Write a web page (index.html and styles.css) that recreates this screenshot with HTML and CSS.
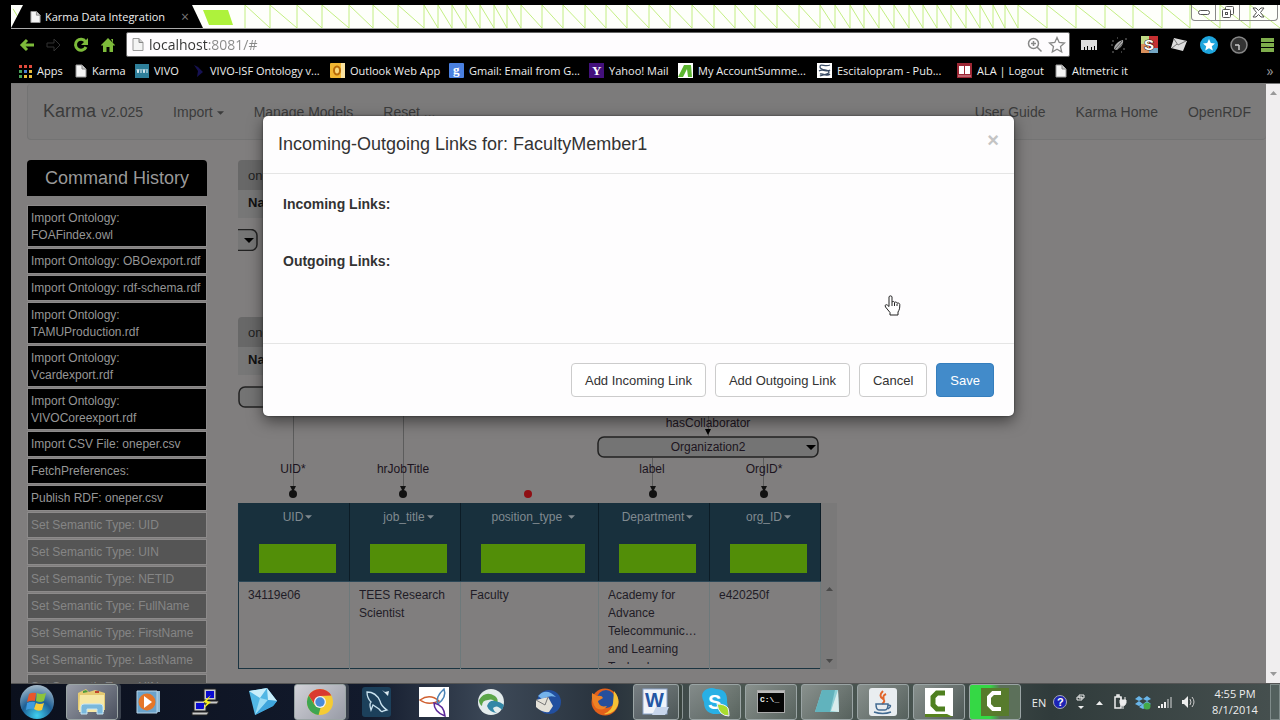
FILE: index.html
```html
<!DOCTYPE html>
<html lang="en">
<head>
<meta charset="utf-8">
<title>Karma Data Integration</title>
<link rel="stylesheet" href="styles.css">
</head>
<body>
<svg class="defs" width="0" height="0" aria-hidden="true">
  <symbol id="doc" viewBox="0 0 12 14"><path d="M1 1h6l4 4v8H1z" fill="#f4f4f4" stroke="#999"/><path d="M7 1v4h4" fill="#ccc" stroke="#888"/></symbol>
  <symbol id="caret" viewBox="0 0 8 4"><path d="M0 0h8L4 4z" fill="currentColor"/></symbol>
</svg>

<header class="chrome">
  <div class="tabstrip">
    <svg class="theme" viewBox="11 0 1269 24" preserveAspectRatio="none" aria-hidden="true">
      <path d="M13 4l7 12" stroke="#b9ea6c" fill="none"/>
      <polyline fill="none" stroke="#c2ee80" points="245,24 245,0 270,24 270,0 297,24 297,0 322,24 322,0 349,24 349,0 373,24 373,0 398,24 398,0 424,24 424,0 438,24 438,0 452,24 452,0 466,24 466,0 480,24 480,0 494,24 494,0 507,24 507,0 521,24 521,0 542,24 542,0 563,24 563,0 585,24 585,0 606,24 606,0 627,24 627,0 649,24 649,0 670,24 670,0 692,24 692,0 714,24 714,0 735,24 735,0 755,24 755,0 777,24 777,0 799,24 799,0 820,24 820,0 835,24 835,0 850,24 850,0 864,24 864,0 879,24 879,0 894,24 894,0 909,24 909,0 923,24 923,0 937,24 937,0 951,24 951,0 966,24 966,0 980,24 980,0 993,24 993,0 1005,24 1005,0 1018,24 1018,0 1047,24 1047,0 1076,24 1076,0 1105,24 1105,0 1133,24 1133,0 1162,24 1162,0 1190,24 1190,0 1220,24 1220,0 1250,24 1250,0 1280,24"/>
    </svg>
    <div class="tab">
      <svg width="11" height="14"><use href="#doc"/></svg>
      <span class="tab-title">Karma Data Integration</span>
      <button class="tab-close" aria-label="Close tab">×</button>
    </div>
    <button class="newtab" aria-label="New tab"></button>
    <div class="winbtns">
      <button aria-label="Minimize"><svg width="12" height="6"><rect x=".5" y=".5" width="11" height="4" rx="2" fill="#fff" stroke="#555"/></svg></button>
      <button aria-label="Restore"><svg width="14" height="13" fill="#fff" stroke="#555"><rect x="4.500" y=".5" width="8" height="8" rx="1"/><rect x="1.500" y="3.500" width="8" height="8" rx="1"/><rect x="4.500" y="6.500" width="2" height="2"/></svg></button>
      <button aria-label="Close"><svg width="13" height="11"><path d="M1 1h3l2.500 2.500L9 1h3L8.500 5.500 12 10H9L6.500 7.500 4 10H1l3.500-4.500z" fill="#fff" stroke="#555"/></svg></button>
    </div>
  </div>

  <div class="toolbar">
    <nav class="nav">
      <button aria-label="Back"><svg width="16" height="14"><path d="M8 2L3 7l5 5M3 7h12" fill="none" stroke="#7dbb3a" stroke-width="3"/></svg></button>
      <button aria-label="Forward"><svg width="16" height="14"><path d="M8 1l6 6-6 6V9H1V5h7z" fill="none" stroke="#333"/></svg></button>
      <button aria-label="Reload"><svg width="16" height="16"><path d="M12.500 4.500A5.500 5.500 0 1 0 13 10" fill="none" stroke="#7dbb3a" stroke-width="3"/><path d="M15 1v7H8z" fill="#7dbb3a"/></svg></button>
      <button aria-label="Home"><svg width="16" height="16"><path d="M8 1l7 7-1 1-1-1v7H9.500v-5h-3v5H3V8L2 9 1 8zM11 2h2v4z" fill="#7dbb3a"/></svg></button>
    </nav>
    <div class="omnibox">
      <svg width="12" height="15"><use href="#doc"/></svg>
      <input class="url" type="text" aria-label="Address" value="localhost:8081/#">
      <svg width="16" height="16" fill="none" stroke="#888"><circle cx="6.500" cy="6.500" r="5" stroke-width="1.500"/><path d="M4 6.500h5M6.500 4v5M10 10l4.500 4.500" stroke-width="1.500"/></svg>
      <svg width="18" height="18"><path d="M9 1.500l2.200 5 5.300.5-4 3.600 1.200 5.400L9 13.200 4.300 16l1.200-5.400L1.500 7l5.300-.5z" fill="none" stroke="#888" stroke-width="1.300"/></svg>
    </div>
    <div class="exts">
      <button aria-label="Ruler"><svg width="16" height="10"><path d="M0 0h16v10h-2V6h-1v4h-2V7h-1v3H7V6H6v4H4V7H3v3H0z" fill="#ddd"/></svg></button>
      <button aria-label="Bug"><svg width="18" height="18"><path d="M4 13C4 9 8 5 13 4c1 4-3 9-7 10z" fill="#aaa"/><path d="M5 13L12 5M7 14l6-7" stroke="#555"/><path d="M2 5h2M1 9h2M7 2h1M13 13h2M11 16h1M2 16h2M15 3h2" stroke="#777"/></svg></button>
      <button aria-label="S extension"><svg width="17" height="17"><path d="M0 0h8v8H0z" fill="#c0da86"/><path d="M8 0h9v12H8z" fill="#c62f31"/><path d="M0 8h8v9H0z" fill="#d8905c"/><path d="M8 12h9v5H8z" fill="#75a7c4"/><text x="3" y="14" class="g-s">S</text></svg></button>
      <button aria-label="Mail"><svg width="18" height="14"><path d="M4 0l13 3-4 10L1 10z" fill="#ddd"/><path d="M4 1l4 6 8-4M2 10l5-4" fill="none" stroke="#777"/></svg></button>
      <button aria-label="Favorites"><svg width="18" height="18"><circle cx="9" cy="9" r="9" fill="#1ea5dd"/><path d="M9 3l1.800 4 4.200.4-3.200 2.800 1 4.300L9 12.300l-3.800 2.200 1-4.300L3 7.400 7.200 7z" fill="#fff"/></svg></button>
      <button aria-label="Clock"><svg width="18" height="18"><circle cx="9" cy="9" r="8" fill="#333" stroke="#888" stroke-width="1.500"/><path d="M9 9v5M9 9H5" stroke="#ccc" stroke-width="1.500"/></svg></button>
      <button aria-label="Menu"><svg width="13" height="14"><path d="M0 2h13M0 7h13M0 12h13" stroke="#7fae4c" stroke-width="4"/></svg></button>
    </div>
  </div>

  <nav class="bookmarks">
    <a href="#"><svg width="14" height="14"><g fill="#e04a3c"><path d="M1 1h3v3H1zM6 1h3v3H6zM11 1h3v3h-3z"/></g><g fill="#49a35a"><path d="M1 6h3v3H1z"/></g><g fill="#4c7fd0"><path d="M6 6h3v3H6z"/></g><g fill="#e8bd3c"><path d="M11 6h3v3h-3zM6 11h3v3H6zM11 11h3v3h-3z"/></g><path d="M1 11h3v3H1z" fill="#49a35a"/></svg>Apps</a>
    <a href="#"><svg width="12" height="14"><use href="#doc"/></svg>Karma</a>
    <a href="#"><svg width="14" height="14"><rect width="14" height="14" fill="#2e7f9a"/><path d="M2 5l1 4 1-4M6 5v4M8 5l1 4 1-4M12 5v4" fill="none" stroke="#e8f4f8"/></svg>VIVO</a>
    <a href="#"><svg width="12" height="14"><path d="M1 1l4 2 5 5-6 5 1-6z" fill="#161152"/></svg>VIVO-ISF Ontology v...</a>
    <a href="#"><svg width="15" height="15"><rect width="15" height="15" rx="1" fill="#f2b632"/><path d="M11 0h4v15h-4z" fill="#fbe3a0"/><ellipse cx="7" cy="7.500" rx="3" ry="4" fill="#f9d77c" stroke="#b96a08" stroke-width="2"/></svg>Outlook Web App</a>
    <a href="#"><svg width="15" height="15"><rect width="15" height="15" rx="1" fill="#4a80e0"/><text x="4" y="11" class="g-g">g</text></svg>Gmail: Email from G...</a>
    <a href="#"><svg width="15" height="15"><rect width="15" height="15" fill="#43107c"/><text x="3" y="12" class="g-y">Y</text></svg>Yahoo! Mail</a>
    <a href="#"><svg width="15" height="15"><rect width="15" height="15" fill="#fff"/><path d="M0 14L6 2h7l1 12h-4L9 6l-4 8z" fill="#5cb531"/></svg>My AccountSumme...</a>
    <a href="#"><svg width="15" height="15"><rect width="15" height="15" fill="#fff"/><path d="M13 2C8 4 3 0 3 4s9 2 9 5-6 2-9 4M2 8c4-3 8 2 11-1M3 11c4-1 7 3 10 0" fill="none" stroke="#3a4c66" stroke-width="1.300"/></svg>Escitalopram - Pub...</a>
    <a href="#"><svg width="15" height="15"><rect width="15" height="15" fill="#9c2734"/><path d="M2 3h5v8H2zM8 3h5v8H8z" fill="#fff"/><path d="M1 13h13" stroke="#e0a0a8"/></svg>ALA | Logout</a>
    <a href="#"><svg width="12" height="14"><use href="#doc"/></svg>Altmetric it</a>
    <button class="more" aria-label="More bookmarks">»</button>
  </nav>
</header>

<main class="viewport">
  <div class="page">
    <nav class="navbar">
      <a class="brand" href="#">Karma <small>v2.025</small></a>
      <a href="#">Import <svg width="7" height="4"><use href="#caret"/></svg></a>
      <a href="#">Manage Models</a>
      <a href="#">Reset ...</a>
      <span class="spacer"></span>
      <a href="#">User Guide</a>
      <a href="#">Karma Home</a>
      <a href="#">OpenRDF</a>
    </nav>
    <div class="columns">
      <aside class="history">
        <h2>Command History</h2>
        <ul>
          <li class="two">Import Ontology:<br>FOAFindex.owl</li>
          <li>Import Ontology: OBOexport.rdf</li>
          <li>Import Ontology: rdf-schema.rdf</li>
          <li class="two">Import Ontology:<br>TAMUProduction.rdf</li>
          <li class="two">Import Ontology:<br>Vcardexport.rdf</li>
          <li class="two">Import Ontology:<br>VIVOCoreexport.rdf</li>
          <li>Import CSV File: oneper.csv</li>
          <li>FetchPreferences:</li>
          <li>Publish RDF: oneper.csv</li>
          <li class="undone">Set Semantic Type: UID</li>
          <li class="undone">Set Semantic Type: UIN</li>
          <li class="undone">Set Semantic Type: NETID</li>
          <li class="undone">Set Semantic Type: FullName</li>
          <li class="undone">Set Semantic Type: FirstName</li>
          <li class="undone">Set Semantic Type: LastName</li>
          <li class="undone">Set Semantic Type: UIN</li>
        </ul>
      </aside>

      <div class="sheets">
        <section class="sheet">
          <div class="sheet-title">oneper.csv</div>
          <div class="sheet-name">Name:</div>
          <svg class="stub" width="20" height="22"><path d="M0 .500H13a6 6 0 0 1 6 6v9a6 6 0 0 1-6 6H0" fill="#767676" stroke="#222" stroke-width="1.500"/><path d="M6 9h10l-5 5z"/></svg>
        </section>
        <section class="sheet">
          <div class="sheet-title">oneper.csv</div>
          <div class="sheet-name">Name:</div>
          <svg class="graph" width="582" height="117" font-size="12" text-anchor="middle">
            <g stroke="#5c5c5c"><path d="M55.500 21v84M165.500 21v84M414.500 72v33M525.500 72v33M470.500 20v30"/></g>
            <rect x="1" y="1" width="400" height="20" rx="6" fill="#747474" stroke="#222" stroke-width="1.500"/>
            <rect x="360" y="51" width="220" height="20" rx="6" fill="#747474" stroke="#222" stroke-width="1.500"/>
            <path d="M568 59h10l-5 5zM467 43h6l-3 6z"/>
            <g fill="#1c1420"><text x="470" y="41">hasCollaborator</text><text x="470" y="65">Organization2</text><text x="55" y="87">UID*</text><text x="165" y="87">hrJobTitle</text><text x="414" y="87">label</text><text x="526" y="87">OrgID*</text></g>
            <g fill="#111"><circle cx="55" cy="108" r="4"/><circle cx="165" cy="108" r="4"/><circle cx="415" cy="108" r="4"/><circle cx="526" cy="108" r="4"/><path d="M52 100h6l-3 6zM162 100h6l-3 6zM412 100h6l-3 6zM523 100h6l-3 6z"/></g>
            <circle cx="290" cy="108" r="4" fill="#8f0f14"/>
          </svg>
          <div class="grid">
            <table>
              <colgroup><col class="c"><col class="c"><col class="w"><col class="c"><col class="c"></colgroup>
              <thead><tr>
                <th>UID<svg width="7" height="4"><use href="#caret"/></svg><div class="bar"></div></th>
                <th>job_title<svg width="7" height="4"><use href="#caret"/></svg><div class="bar"></div></th>
                <th>position_type <svg width="7" height="4"><use href="#caret"/></svg><div class="bar"></div></th>
                <th>Department<svg width="7" height="4"><use href="#caret"/></svg><div class="bar"></div></th>
                <th>org_ID<svg width="7" height="4"><use href="#caret"/></svg><div class="bar"></div></th>
              </tr></thead>
              <tbody><tr>
                <td><div>34119e06</div></td>
                <td><div>TEES Research Scientist</div></td>
                <td><div>Faculty</div></td>
                <td><div>Academy for Advance Telecommunic… and Learning Technology</div></td>
                <td><div>e420250f</div></td>
              </tr></tbody>
            </table>
            <div class="gridscroll"><svg width="7" height="4"><path d="M0 4h7L3.500 0z" fill="#4a4a4a"/></svg><svg width="7" height="4"><path d="M0 0h7L3.500 4z" fill="#4a4a4a"/></svg></div>
          </div>
        </section>
      </div>
    </div>
  </div>
  <div class="scrollbar"><svg width="7" height="4"><path d="M0 4h7L3.500 0z" fill="#999"/></svg><svg width="7" height="4"><path d="M0 0h7L3.500 4z" fill="#999"/></svg></div>

  <div class="dialog" role="dialog" aria-labelledby="dlg">
    <div class="dialog-head"><h4 id="dlg">Incoming-Outgoing Links for: FacultyMember1</h4><button class="x" aria-label="Close">×</button></div>
    <div class="dialog-body"><p>Incoming Links:</p><p>Outgoing Links:</p></div>
    <div class="dialog-foot">
      <button class="btn">Add Incoming Link</button>
      <button class="btn">Add Outgoing Link</button>
      <button class="btn">Cancel</button>
      <button class="btn primary">Save</button>
    </div>
    <svg class="cursor" width="18" height="22"><path d="M5 2c0-1.500 3-1.500 3 0v5c1-1 2.500-.5 2.500.5 1-1 2.500-.3 2.500.8 1-.8 2.800 0 2.800 1.200 0 4-.3 5-1.800 7.500v3H6v-2.500L1.500 12c-1-2 .5-3 2-1.800L5 11.500z" fill="#fff" stroke="#222"/><path d="M8 7v4M10.500 8v3M13 9v2" stroke="#222"/></svg>
  </div>
</main>

<footer class="taskbar">
  <button class="start" aria-label="Start"><svg width="36" height="34"><defs><radialGradient id="orb" cx=".5" cy=".9" r=".9"><stop offset="0" stop-color="#3fd0ef"/><stop offset=".5" stop-color="#1d5f96"/><stop offset="1" stop-color="#a5bac9"/></radialGradient></defs><circle cx="18" cy="17" r="17" fill="url(#orb)"/><path d="M10 9q3-2 7-1l-1 8q-4-1-8 1z" fill="#e8562a"/><path d="M18 8q4 2 9 0l-2 8q-4 2-8 0z" fill="#8cc43c"/><path d="M8 18q4-2 8-1l-1 7q-4-1-8 1z" fill="#3f9be0"/><path d="M17 18q4 2 8 0l-2 7q-4 2-8-1z" fill="#f8cc3a"/></svg></button>
  <button class="task open" aria-label="Explorer"><svg width="32" height="28"><path d="M2 5l8-4 3 3 6-2 10 3v17H2z" fill="#e5ca72"/><path d="M4 7h24v17H3z" fill="#f6e8a6"/><path d="M7 3l3-1 2 2-5 1z" fill="#4c9c3c"/><path d="M19 3h4v2h-4z" fill="#c2452c"/><path d="M5 26v-7q0-3 3-3h16q3 0 3 3v7h-6v-5H11v5z" fill="#79b8dc" stroke="#c8e5f4"/></svg></button>
  <button class="task" aria-label="Media Player"><svg width="26" height="26"><path d="M6 2h18v21H6z" fill="#8fbad6"/><path d="M1 2h20v22H1z" fill="#6ba3cb" stroke="#b7d3e6"/><circle cx="11" cy="13" r="8.500" fill="#e57628"/><path d="M8 7l8 6-8 6z" fill="#fff"/></svg></button>
  <button class="task" aria-label="PuTTY"><svg width="30" height="30"><g stroke="#222" fill="#ccc"><path d="M13 2h12v11H13zM14 14h14l-2 3H13zM3 14h12v10H3zM1 25h17l-2 3H1z"/></g><path d="M15 4h8v7h-8zM5 16h8v6H5z" fill="#0a0ad0"/><path d="M20 8l-8 7 4 1-4 6 8-7-4-1z" fill="#f8f020"/></svg></button>
  <button class="task" aria-label="Diamond"><svg width="30" height="30"><path d="M1 4l18-3 10 13-4 5L7 28z" fill="#52b7e5"/><path d="M1 4l18-3-7 10zM19 1l10 13-9-1z" fill="#c9eefb"/><path d="M12 11l8 2L7 28z" fill="#9adcf5"/><path d="M20 13l9 1-4 5-18 9z" fill="#3fa5dc"/></svg></button>
  <button class="task open bright" aria-label="Chrome"><svg width="28" height="28"><circle cx="14" cy="14" r="13" fill="#f5cb34"/><path d="M2.700 7.500A13 13 0 0 1 25.300 7.500L14 8 9 17z" fill="#d93a30"/><path d="M2.700 7.500L8.500 17l6 3-2 7A13 13 0 0 1 2.700 7.500z" fill="#3ea551"/><circle cx="14" cy="14" r="6" fill="#f2f2f2"/><circle cx="14" cy="14" r="4.700" fill="#4a8bd8"/></svg></button>
  <button class="task" aria-label="MySQL Workbench"><svg width="30" height="30"><rect width="29" height="30" rx="3" fill="#1c405b"/><path d="M5 5q9 0 13 9 1 5 7 9l-4 1q-1 2-4-2l-6-4-2 5q-2-6 0-8-4-4-4-10z" fill="none" stroke="#c9e2ef" stroke-width="1.300"/><path d="M20 3l3 2 4-1-1 5-3-3z" fill="#dbe9f0"/></svg></button>
  <button class="task" aria-label="Karma"><svg width="30" height="30"><rect width="30" height="30" fill="#fff"/><g fill="none" stroke-width="1.500"><path d="M1 13q10-7 19 1Q9 19 1 13z" stroke="#d06030"/><path d="M25 2q3 8-6 15-3-7 6-15z" stroke="#4a84b8"/><path d="M26 29q-11-4-11-13 10 2 11 13z" stroke="#5c2a9a"/></g></svg></button>
  <button class="task" aria-label="Browser sync"><svg width="28" height="28"><circle cx="14" cy="14" r="13" fill="#e4ecec"/><path d="M2 12Q8 2 18 8q4 3 2 8-4-6-9-4-6 0-6 6-3-2-3-6z" fill="#5ba548"/><path d="M10 18q2-6 8-5 6 1 9 4l-2 5q-5-6-9-2 1 4 4 5-8-1-10-7z" fill="#3487a6"/></svg></button>
  <button class="task" aria-label="Thunderbird"><svg width="28" height="28"><circle cx="15" cy="14" r="12" fill="#224f9f"/><path d="M4 8q8-9 18 1-7-2-14 2z" fill="#74b2ea"/><path d="M2 12l12-3 5 9-4 6q-7 1-13-5z" fill="#e4e1d8"/><path d="M2 12l9 5 3-8" fill="none" stroke="#777"/></svg></button>
  <button class="task" aria-label="Firefox"><svg width="30" height="30"><circle cx="15" cy="15" r="13.500" fill="#e2601b"/><circle cx="16" cy="12" r="9" fill="#264f9c"/><path d="M24 4q9 11 0 20-5 4-10 3 9-4 9-11z" fill="#f6c135"/><path d="M2 6l5 3q5-1 6 2l-5 3q1 7 9 5-4 6-11 2Q1 15 2 6z" fill="#ee8225"/></svg></button>
  <button class="task open word" aria-label="Word"><svg width="28" height="28"><rect x="1" y="1" width="24" height="25" fill="#f1f4fa" stroke="#8ba4ca"/><path d="M14 19h13l-4 8H10z" fill="#c8d6ec"/><text x="3" y="19" class="g-w">W</text></svg></button>
  <button class="task open" aria-label="Skype"><svg width="30" height="30"><path d="M7 2q5-2 9 0 12 0 11 13 3 12-9 12Q4 28 4 15-1 6 7 2z" fill="#28b0e5"/><text x="8" y="22" class="g-k">S</text><path d="M17 17q8 0 11 4 1 4 1 8-10 0-12-12z" fill="#a9dc2e" stroke="#eef"/></svg></button>
  <button class="task open" aria-label="Command Prompt"><svg width="28" height="24"><rect x=".5" y=".5" width="27" height="22" fill="#050505" stroke="#aaa"/><path d="M1 1h26v2H1z" fill="#bbb"/><text x="3" y="12" class="g-c">C:\_</text></svg></button>
  <button class="task open" aria-label="Notepad"><svg width="28" height="28"><path d="M9 2h16l1 22H2z" fill="#8fd0d6"/><path d="M9 2h13l-5 22H2z" fill="#61b3bd"/><path d="M25 2l1 22-8-1z" fill="#d8ecec"/></svg></button>
  <button class="task open" aria-label="Java"><svg width="28" height="28"><rect width="28" height="28" rx="3" fill="#e9edf0"/><path d="M14 3q-5 5 0 8 3 2-1 5M17 6q-4 2-2 5" fill="none" stroke="#e2662b" stroke-width="2"/><path d="M7 16h12q0 6-3 6h-6q-3 0-3-6zM19 17q5 0 0 4M5 24q9 3 17 0" fill="none" stroke="#426a91" stroke-width="1.500"/></svg></button>
  <button class="task open" aria-label="Camtasia"><svg width="30" height="30"><path d="M1 1h28v28H1z" fill="#fff"/><path d="M1 27h22l6 3H1z" fill="#58831f"/><path d="M21 6H13l-4 4v8l4 4h8" fill="none" stroke="#4f8020" stroke-width="5"/></svg></button>
  <button class="task open rec" aria-label="Camtasia Recorder"><svg width="30" height="30"><path d="M1 1h28v28H1z" fill="#577b2c"/><path d="M21 6H13l-4 4v8l4 4h8" fill="none" stroke="#fff" stroke-width="4"/></svg></button>
  <div class="tray">
    <span>EN</span>
    <svg width="14" height="14"><circle cx="7" cy="7" r="6.500" fill="#1c23b4" stroke="#aab"/><text x="4" y="11" class="g-q">?</text></svg>
    <svg width="10" height="20"><path d="M3 3h5v3H3zM1 5h5v3H1z" fill="none" stroke="#eee"/><path d="M2 14h6l-3 3z" fill="#eee"/></svg>
    <svg width="8" height="5"><path d="M0 5h7L3.500 1z" fill="#eee"/></svg>
    <svg width="14" height="16"><path d="M2 3h6v11H2zM4 1h2v2H4z" fill="none" stroke="#eee" stroke-width="1.500"/><path d="M7 6h6v3q-1 3-3 3t-3-3zM8 3v3M12 3v3M10 12v3" fill="#eee" stroke="#eee"/></svg>
    <svg width="16" height="15"><path d="M4 1l4 3-4 2-4-2zM12 1l4 3-4 2-4-2zM4 6l4 3-4 2-4-2zM12 6l4 3-4 2-4-2zM8 9l4 3-4 2-4-2z" fill="#69b6ea"/><circle cx="12" cy="11" r="3.500" fill="#44a948"/></svg>
    <svg width="14" height="12"><path d="M1 10v2M4 8v4M7 6v6" stroke="#eee" stroke-width="2"/><path d="M10 3v9M13 1v11" stroke="#8a9090" stroke-width="2"/></svg>
    <svg width="15" height="14"><path d="M1 5h2l4-4v12L3 9H1z" fill="#eee"/><path d="M9 4q2 3 0 6M11 2q4 5 0 10" fill="none" stroke="#ccc"/></svg>
    <div class="clock">4:55 PM<br>8/1/2014</div>
    <button class="desk" aria-label="Show desktop"></button>
  </div>
</footer>
</body>
</html>
```
FILE: styles.css
```css
* { box-sizing: border-box; }
body { margin: 0; padding: 5px 0 0 11px; height: 100vh; display: flex; flex-direction: column; overflow: hidden; background: #000; font-family: "Liberation Sans", Arial, sans-serif; font-size: 12px; }
button { padding: 0; border: 0; background: none; color: inherit; font: inherit; display: flex; align-items: center; justify-content: center; }
a { color: inherit; text-decoration: none; }
svg { flex: none; }
.defs { position: absolute; }

.chrome { flex: none; font-family: "Open Sans", "Noto Sans", sans-serif; font-size: 11px; color: #eee; border-bottom: 1px solid #777; }
.tabstrip { position: relative; display: flex; height: 24px; background: #fefffb; border-bottom: 1px solid #aaa; }
.theme { position: absolute; inset: 0; width: 100%; height: 100%; }
.tab { position: relative; display: flex; align-items: center; gap: 4px; width: 192px; padding: 0 14px 0 19px; background: #000; clip-path: polygon(12px 0, 181px 0, 192px 100%, 0 100%); }
.tab-title { flex: 1; white-space: nowrap; }
.tab-close { color: #777; font-size: 14px; }
.newtab { position: relative; width: 30px; height: 15px; margin-top: 5px; background: #aef23c; clip-path: polygon(0 0, 25px 0, 100% 100%, 6px 100%); }
.winbtns { position: relative; display: flex; margin: 0 2px 0 auto; height: 16px; border: 1px solid #888; border-top: 0; border-radius: 0 0 4px 4px; }
.winbtns button { width: 24px; border-right: 1px solid #888; }
.winbtns button:last-child { width: 37px; border: 0; }

.toolbar { display: flex; align-items: center; height: 31px; }
.nav { display: flex; padding: 0 5px 0 2px; }
.nav button { width: 27px; height: 24px; }
.omnibox { flex: 1; display: flex; align-items: center; gap: 5px; height: 25px; padding: 0 3px 0 5px; background: #fefcfe; border: 1px solid #666; border-radius: 2px; }
.url { flex: 1; min-width: 0; padding: 0; border: 0; outline: 0; font-family: "Open Sans", "Noto Sans", sans-serif; font-size: 14px; color: transparent; background: linear-gradient(to right, #333 59px, #888 59px); -webkit-background-clip: text; background-clip: text; }
.exts { display: flex; padding-left: 4px; }
.exts button { width: 30px; }
.exts button:last-child { width: 26px; }

.bookmarks { display: grid; grid-template-columns: 57px 60px 58px 137px 119px 140px 89px 139px 140px 98px 1fr 20px; height: 23px; padding: 0 0 2px 7px; }
.bookmarks a { display: flex; align-items: center; gap: 5px; white-space: nowrap; }
.more { color: #999; font-size: 14px; }

.viewport { position: relative; flex: 1; min-height: 0; display: flex; overflow: hidden; background: #807e7e; }
.page { flex: 1; min-width: 0; padding-left: 16px; }
.navbar { display: flex; align-items: center; gap: 30px; height: 56px; padding: 0 15px; border: 1px solid #737373; border-top: 0; border-right: 0; border-radius: 4px; background: #7c7b7b; color: #3b3b3b; font-size: 14px; }
.navbar svg { vertical-align: middle; }
.brand { font-size: 18px; }
.brand small { font-size: 14px; }
.spacer { flex: 1; }
.columns { display: flex; gap: 31px; padding-top: 20px; }

.history { width: 180px; flex: none; }
.history h2 { margin: 0 0 10px; height: 36px; line-height: 37px; border-radius: 4px 4px 0 0; background: #000; color: #999; font-size: 18px; font-weight: 400; text-align: center; }
.history ul { margin: 0; padding: 0 1px; list-style: none; display: flex; flex-direction: column; gap: 3px; line-height: 17px; }
.history li { height: 24px; padding: 4px 2px 2px 3px; background: #000; color: #969696; box-shadow: 0 0 0 1px #8c8a8a; white-space: nowrap; }
.history .two { height: 40px; }
.history .undone { background: #555; color: #858585; }

.sheets { display: flex; flex-direction: column; gap: 66px; width: 599px; }
.sheet-title, .sheet-name { height: 30px; padding: 0 10px; line-height: 32px; font-size: 13px; color: #222; }
.sheet-title { background: #686868; border-radius: 4px 4px 0 0; }
.sheet-name { height: 28px; line-height: 26px; margin-bottom: 11px; background: #777; color: #111; font-weight: 700; }
.stub, .graph { display: block; }
.graph { width: 582px; }
.grid { display: flex; }
table { width: 582px; table-layout: fixed; border-collapse: collapse; border: 1px solid #1b3441; border-top: 0; }
.c { width: 111px; }
.w { width: 138px; }
th { height: 78px; padding: 5px 13px 7px 20px; vertical-align: top; background: #18303d; border-right: 1px solid #0c1c26; border-bottom: 1px solid #2c4757; color: #808a90; font-size: 12px; font-weight: 400; line-height: 18px; white-space: nowrap; }
th svg { margin: 0 0 2px 2px; vertical-align: middle; }
.bar { height: 29px; margin-top: 18px; background: #528e08; }
td { padding: 4px 9px; vertical-align: top; border-right: 1px solid #6d797b; color: #1f1c26; font-size: 12px; line-height: 18px; }
td div { height: 78px; overflow: hidden; }
.gridscroll { width: 17px; display: flex; flex-direction: column; justify-content: space-between; align-items: center; padding: 84px 0 6px; background: #7a7979; }
.scrollbar { width: 14px; display: flex; flex-direction: column; justify-content: space-between; align-items: center; padding: 7px 0; background: #f0eeef; }

.dialog { position: absolute; top: 32px; left: 252px; right: 266px; background: #fefdfe; border-radius: 5px; box-shadow: 0 5px 15px rgba(0,0,0,.5), 0 0 2px #333; color: #333; }
.dialog-head { display: flex; align-items: center; justify-content: space-between; height: 58px; padding: 0 15px; border-bottom: 1px solid #e5e5e5; }
.dialog-head h4 { margin: 0; font-size: 18px; font-weight: 400; }
.x { height: 18px; margin-bottom: 9px; color: #c4c4c4; font-size: 20px; font-weight: 700; }
.dialog-body { height: 169px; padding: 20px; font-size: 14px; font-weight: 700; line-height: 21px; }
.dialog-body p { margin: 0 0 36px; }
.dialog-foot { display: flex; justify-content: flex-end; gap: 9px; padding: 19px 20px; border-top: 1px solid #e5e5e5; }
.btn { height: 34px; padding: 0 13px; border: 1px solid #ccc; border-radius: 4px; background: #fff; font-size: 13px; }
.primary { border-color: #357ebd; background: #428bca; color: #fff; }
.cursor { position: absolute; left: 621px; top: 179px; }

.taskbar { flex: none; display: flex; height: 37px; border-top: 1px solid #555; background: linear-gradient(to right, #0b101d, #121a2c 28%, #3d4958 38%, #28323c 47%, #4b5751 56%, #47534f 72%, #303b3b 82%, #46504f); font-family: "Open Sans", "Noto Sans", sans-serif; color: #eee; }
.start { width: 52px; }
.task { width: 57px; }
.task.open { width: 52px; margin-right: 4px; border: 1px solid #9aa4a4; border-radius: 3px; background: linear-gradient(135deg, rgba(255,255,255,.35), rgba(255,255,255,.08)); }
.start + .task.open, .task.bright { margin: 0 2px 0 3px; box-shadow: 3px 0 0 #39404c; }
.start + .task.open { background: linear-gradient(135deg, #999da8, #4a505e); }
.task.bright { background: linear-gradient(135deg, #d2d2d8, #989ba6); }
.task.word { width: 46px; margin-right: 10px; box-shadow: 3px 0 0 #39443f, 4px 0 0 #8a9494; }
.task.rec { background: linear-gradient(to right, #35d845 40%, #5c705a 60%); }
.tray { display: grid; grid-template-columns: 22px 20px 22px 16px 24px 22px 22px 24px 70px 10px; align-items: center; justify-items: center; margin-left: auto; font-size: 11px; }
.clock { text-align: center; line-height: 16px; }
.desk { width: 10px; height: 36px; border: 1px solid #7f8b8a; background: #53605e; }

.g-s { font: 700 15px "Liberation Sans", sans-serif; fill: #fff; stroke: #222; stroke-width: 1px; paint-order: stroke; }
.g-g { font: 700 13px "Liberation Serif", serif; fill: #fff; }
.g-y { font: 700 13px "Liberation Serif", serif; fill: #fff; }
.g-w { font: 700 20px "Liberation Sans", sans-serif; fill: #2456a4; }
.g-k { font: 700 20px "Liberation Sans", sans-serif; fill: #fff; }
.g-c { font: 700 8px "Liberation Mono", monospace; fill: #eee; }
.g-q { font: 700 11px "Liberation Sans", sans-serif; fill: #fff; }
```
